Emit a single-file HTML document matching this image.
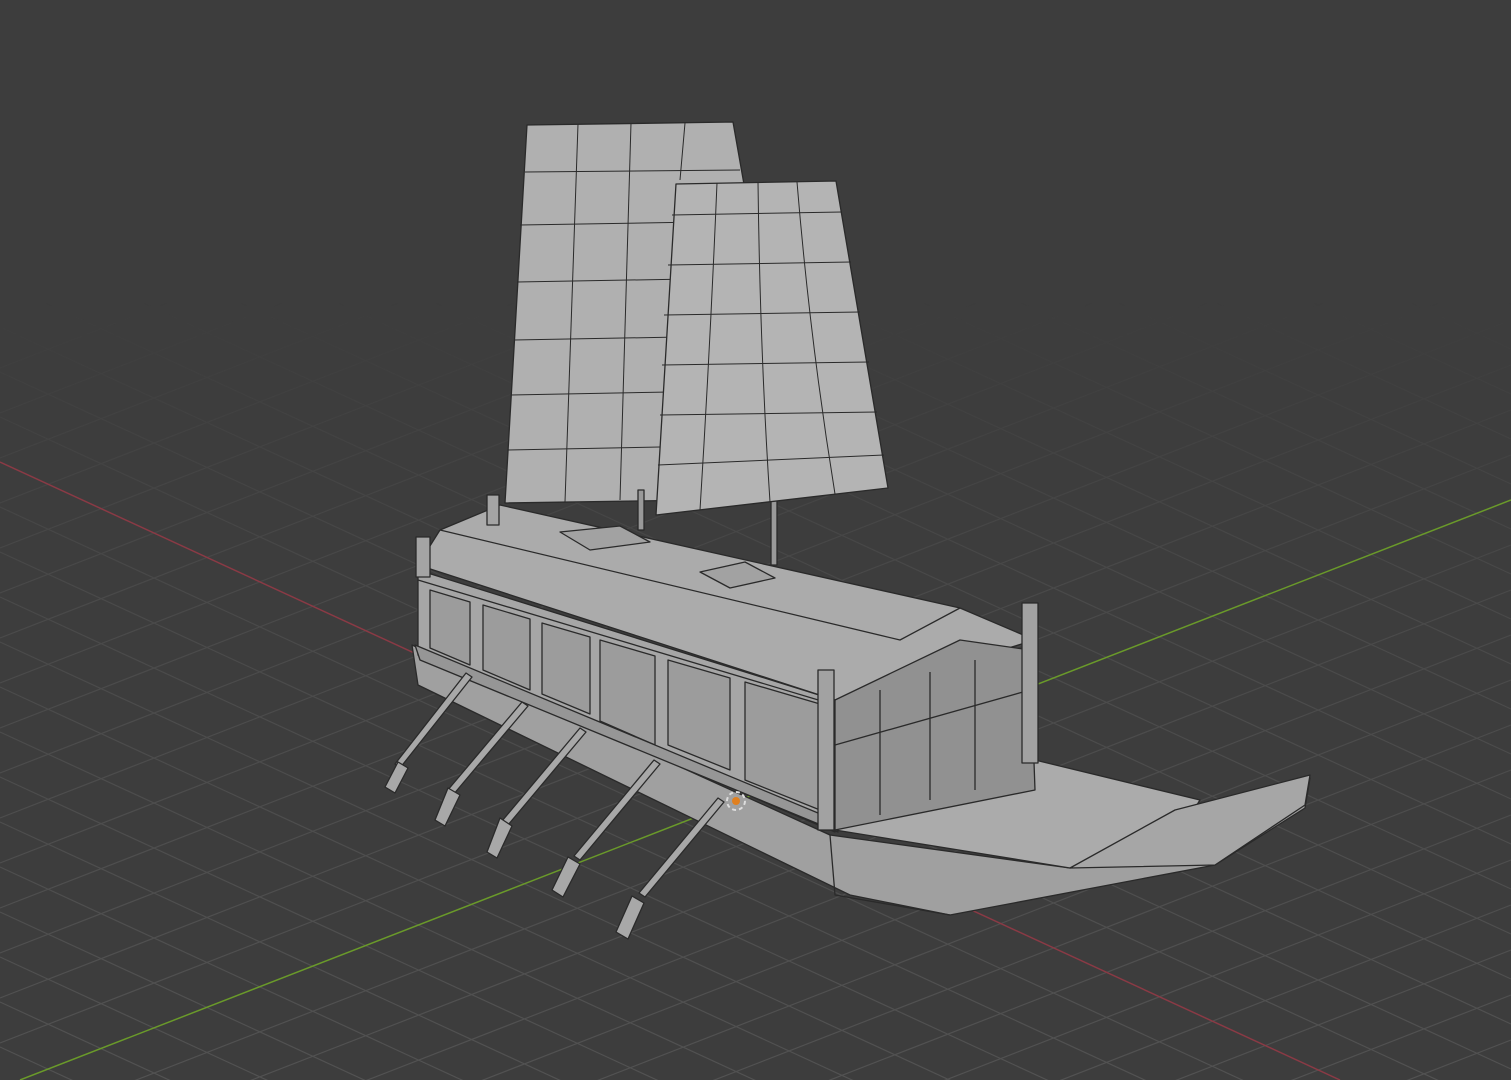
<!DOCTYPE html>
<html><head><style>html,body{margin:0;padding:0;background:#3d3d3d;overflow:hidden;width:1511px;height:1080px}svg{display:block}</style></head><body>
<svg width="1511" height="1080" viewBox="0 0 1511 1080" xmlns="http://www.w3.org/2000/svg" style="overflow:hidden">
<defs>
<linearGradient id="fade" x1="0" y1="0" x2="0" y2="1"><stop offset="0.28" stop-color="#fff" stop-opacity="0"/><stop offset="0.55" stop-color="#fff" stop-opacity="0.6"/><stop offset="1" stop-color="#fff" stop-opacity="1"/></linearGradient>
<mask id="m"><rect width="1511" height="1080" fill="url(#fade)"/></mask>
</defs>
<rect width="1511" height="1080" fill="#3d3d3d"/>
<g mask="url(#m)" stroke="#525252" stroke-width="1.2">
<g>
<line x1="0" y1="-438" x2="1511" y2="259"/><line x1="0" y1="-393" x2="1511" y2="304"/><line x1="0" y1="-348" x2="1511" y2="349"/><line x1="0" y1="-303" x2="1511" y2="394"/><line x1="0" y1="-258" x2="1511" y2="439"/><line x1="0" y1="-213" x2="1511" y2="484"/><line x1="0" y1="-168" x2="1511" y2="529"/><line x1="0" y1="-123" x2="1511" y2="574"/><line x1="0" y1="-78" x2="1511" y2="619"/><line x1="0" y1="-33" x2="1511" y2="664"/><line x1="0" y1="12" x2="1511" y2="709"/><line x1="0" y1="57" x2="1511" y2="754"/><line x1="0" y1="102" x2="1511" y2="799"/><line x1="0" y1="147" x2="1511" y2="844"/><line x1="0" y1="192" x2="1511" y2="889"/><line x1="0" y1="237" x2="1511" y2="934"/><line x1="0" y1="282" x2="1511" y2="979"/><line x1="0" y1="327" x2="1511" y2="1024"/><line x1="0" y1="372" x2="1511" y2="1069"/><line x1="0" y1="417" x2="1511" y2="1114"/><line x1="0" y1="507" x2="1511" y2="1204"/><line x1="0" y1="552" x2="1511" y2="1249"/><line x1="0" y1="597" x2="1511" y2="1294"/><line x1="0" y1="642" x2="1511" y2="1339"/><line x1="0" y1="687" x2="1511" y2="1384"/><line x1="0" y1="732" x2="1511" y2="1429"/><line x1="0" y1="777" x2="1511" y2="1474"/><line x1="0" y1="822" x2="1511" y2="1519"/><line x1="0" y1="867" x2="1511" y2="1564"/><line x1="0" y1="912" x2="1511" y2="1609"/><line x1="0" y1="957" x2="1511" y2="1654"/><line x1="0" y1="1002" x2="1511" y2="1699"/><line x1="0" y1="1047" x2="1511" y2="1744"/>
</g>
<g>
<line x1="0" y1="368" x2="1511" y2="-220"/><line x1="0" y1="413" x2="1511" y2="-175"/><line x1="0" y1="458" x2="1511" y2="-130"/><line x1="0" y1="503" x2="1511" y2="-85"/><line x1="0" y1="548" x2="1511" y2="-40"/><line x1="0" y1="593" x2="1511" y2="5"/><line x1="0" y1="638" x2="1511" y2="50"/><line x1="0" y1="683" x2="1511" y2="95"/><line x1="0" y1="728" x2="1511" y2="140"/><line x1="0" y1="773" x2="1511" y2="185"/><line x1="0" y1="818" x2="1511" y2="230"/><line x1="0" y1="863" x2="1511" y2="275"/><line x1="0" y1="908" x2="1511" y2="320"/><line x1="0" y1="953" x2="1511" y2="365"/><line x1="0" y1="998" x2="1511" y2="410"/><line x1="0" y1="1043" x2="1511" y2="455"/><line x1="0" y1="1133" x2="1511" y2="545"/><line x1="0" y1="1178" x2="1511" y2="590"/><line x1="0" y1="1223" x2="1511" y2="635"/><line x1="0" y1="1268" x2="1511" y2="680"/><line x1="0" y1="1313" x2="1511" y2="725"/><line x1="0" y1="1358" x2="1511" y2="770"/><line x1="0" y1="1403" x2="1511" y2="815"/><line x1="0" y1="1448" x2="1511" y2="860"/><line x1="0" y1="1493" x2="1511" y2="905"/><line x1="0" y1="1538" x2="1511" y2="950"/><line x1="0" y1="1583" x2="1511" y2="995"/><line x1="0" y1="1628" x2="1511" y2="1040"/><line x1="0" y1="1673" x2="1511" y2="1085"/>
</g>
</g>
<line x1="0" y1="462" x2="1340" y2="1080" stroke="#8a3a45" stroke-width="1.5"/>
<line x1="20" y1="1080" x2="1511" y2="500" stroke="#6a9a2a" stroke-width="1.5"/>
<g stroke="#2a2a2a" stroke-width="1.3" stroke-linejoin="round">
<polygon points="527,125 733,122 745,190 700,500 505,503" fill="#b0b0b0"/>
<g fill="none" stroke-width="1"><line x1="525" y1="172" x2="740" y2="170"/><line x1="520" y1="225" x2="700" y2="222"/><line x1="517" y1="282" x2="690" y2="279"/><line x1="514" y1="340" x2="680" y2="337"/><line x1="511" y1="395" x2="670" y2="392"/><line x1="508" y1="450" x2="660" y2="447"/><line x1="578" y1="124" x2="565" y2="502"/><line x1="631" y1="123" x2="620" y2="500"/><line x1="685" y1="123" x2="680" y2="180"/></g>
<rect x="638" y="490" width="6" height="40" fill="#999"/><rect x="771" y="500" width="6" height="65" fill="#999"/>
<polygon points="676,184 836,181 888,488 656,515" fill="#b4b4b4"/>
<g fill="none" stroke-width="1"><line x1="672" y1="215" x2="842" y2="212"/><line x1="668" y1="265" x2="851" y2="262"/><line x1="664" y1="315" x2="860" y2="312"/><line x1="662" y1="365" x2="869" y2="362"/><line x1="660" y1="415" x2="877" y2="412"/><line x1="658" y1="465" x2="884" y2="455"/><path d="M717,183 Q710,350 700,510"/><path d="M758,182 Q760,350 770,502"/><path d="M797,182 Q810,340 835,494"/></g>
<polygon points="412,645 830,835 1070,868 1310,778 1305,808 1215,865 950,915 850,895 418,685" fill="#a0a0a0"/>
<polyline points="830,835 835,895 950,915" fill="none"/>
<polygon points="835,830 1035,760 1200,800 1175,840 1070,868" fill="#ababab"/>
<polygon points="1175,810 1310,775 1305,805 1215,865 1070,868" fill="#a6a6a6"/>
<polygon points="418,570 835,700 835,832 418,655" fill="#a6a6a6"/>
<g fill="#9c9c9c"><polygon points="430,590 470,602 470,665 430,648"/><polygon points="483,605 530,619 530,690 483,670"/><polygon points="542,623 590,637 590,714 542,694"/><polygon points="600,640 655,656 655,745 600,721"/><polygon points="668,660 730,678 730,770 668,745"/><polygon points="745,682 820,704 820,810 745,780"/></g>
<polygon points="415,645 830,818 838,832 420,660" fill="#969696"/>
<polygon points="418,565 440,530 500,505 960,608 1035,640 835,700" fill="#ababab"/>
<polyline points="440,530 900,640 960,608" fill="none"/>
<polyline points="418,580 835,705" fill="none"/>
<polygon points="560,532 620,526 650,542 590,550" fill="#a2a2a2"/>
<polygon points="700,572 745,562 775,578 730,588" fill="#a2a2a2"/>
<polygon points="835,700 960,640 1030,650 1035,790 835,830" fill="#919191"/>
<polyline points="835,745 1030,690" fill="none"/>
<g fill="none"><line x1="880" y1="690" x2="880" y2="815"/><line x1="930" y1="672" x2="930" y2="800"/><line x1="975" y1="660" x2="975" y2="790"/></g>
<rect x="416" y="537" width="14" height="40" fill="#a4a4a4"/><rect x="487" y="495" width="12" height="30" fill="#a4a4a4"/><rect x="818" y="670" width="16" height="160" fill="#a2a2a2"/><rect x="1022" y="603" width="16" height="160" fill="#a2a2a2"/>
<g fill="#a8a8a8"><polygon points="466,673 472,677 400,768 395,764"/><polygon points="385,787 398,762 408,768 395,793"/><polygon points="522,702 528,706 453,795 447,791"/><polygon points="435,820 448,788 460,795 445,826"/><polygon points="580,728 586,732 508,825 502,821"/><polygon points="487,852 500,818 512,826 497,858"/><polygon points="654,760 660,764 580,860 574,856"/><polygon points="552,890 568,857 580,864 563,897"/><polygon points="718,798 724,802 645,897 639,893"/><polygon points="616,932 632,896 644,903 628,939"/></g>
</g>
<circle cx="736" cy="801" r="9" fill="none" stroke="#ddd" stroke-width="2" stroke-dasharray="4 3"/>
<circle cx="736" cy="801" r="4" fill="#e08020"/>
</svg>
</body></html>
